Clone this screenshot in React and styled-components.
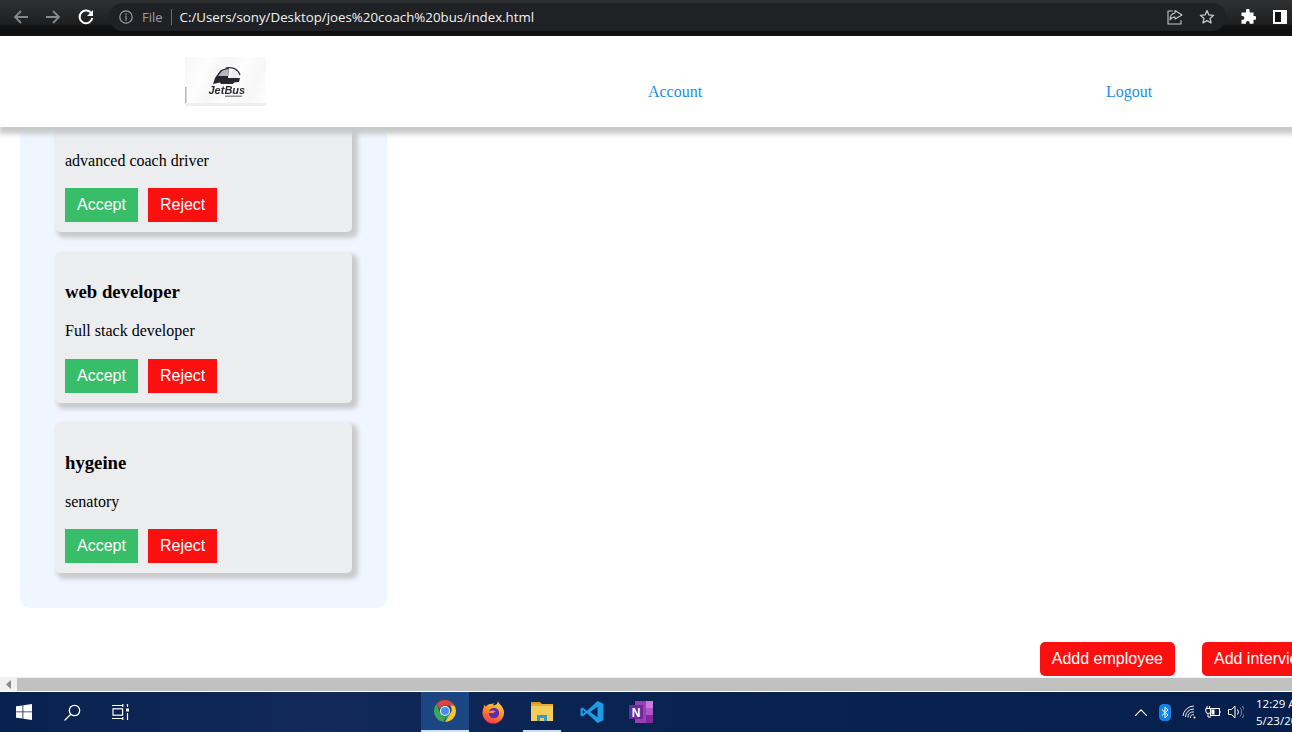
import React from "react";
import styled, { createGlobalStyle } from "styled-components";

const Global = createGlobalStyle`
  html, body { margin: 0; padding: 0; width: 1292px; height: 732px; overflow: hidden; background: #fff; }
  * { box-sizing: border-box; }
`;
const Screen = styled.div`
  width: 1292px; height: 732px; display: flex; flex-direction: column; overflow: hidden;
`;
const BrowserBar = styled.header`
  height: 36px; flex: none; display: flex; align-items: flex-start;
  padding: 3px 0 0 9px;
  background: linear-gradient(#2f3032 0, #1e1f20 24px, #121212 26px, #0c0c0c 100%);
  color: #fff;
  border-bottom: 3px solid #111;
`;
const NavIcon = styled.button`
  width: 24px; height: 28px; padding: 0; border: 0; background: none; flex: none;
  margin-right: ${p => p.$gap}px; display: flex; align-items: center; justify-content: center;
  color: ${p => p.$dim ? "#85888c" : "#fff"};
`;
const Omnibox = styled.div`
  width: 1117px; height: 28px; margin-left: 11px; margin-right: 11px; flex: none; border-radius: 14px; background: #202124;
  display: flex; align-items: center; padding: 0 11px 0 9px;
  font: 13px "Open Sans", sans-serif;
`;
const Scheme = styled.span`
  color: #9aa0a6; margin-left: 8px; padding-right: 8px; border-right: 1px solid #6a6d70; line-height: 16px; font-size: 13px;
`;
const Url = styled.span`
  color: #f1f3f4; margin-left: 8px; flex: 1; font-size: 13.3px; white-space: nowrap;
`;
const BoxIcon = styled.span`
  display: flex; margin-left: ${p => p.$gap || 0}px; color: ${p => p.$c || "#c4c7ca"};
  margin-top: ${p => p.$top || 0}px;
`;
const Viewport = styled.main`
  flex: 1; min-height: 0; overflow: hidden; background: #fff;
`;
const Page = styled.div`
  width: 1358px;
`;
const TopNav = styled.nav`
  position: relative; z-index: 2; height: 91px; background: #fff;
  display: grid; grid-template-columns: 450px 450px 458px; align-items: center; justify-items: center;
  box-shadow: 0 6px 5px 1px #c9c9c9;
`;
const NavLink = styled.a`
  font: 16px "Liberation Serif", serif; color: #1b8fdf; margin-top: 21px;
`;
const Logo = styled.div`
  width: 81px; height: 49px;
  background: linear-gradient(115deg, #f7f7f8 0, #fdfdfd 25%, #f6f6f7 40%, #fdfdfd 60%, #f7f7f8 80%, #fff 100%);
`;
const Content = styled.div`
  margin-top: -80.6px;
`;
const Panel = styled.section`
  width: 367px; margin-left: 20px; padding: 35px; background: #eff6ff; border-radius: 10px;
  display: flex; flex-direction: column; gap: 19.4px;
`;
const Card = styled.article`
  height: 151px; padding: 10px; background: #ecedef; border-radius: 5px;
  width: 297px;
  box-shadow: 4px 4px 4px 2px #cbcbcb;
  font-family: "Liberation Serif", serif; color: #000;
  display: flex; flex-direction: column;
`;
const Title = styled.h3`
  margin: 19.400px 0 0; font-size: 18.72px; line-height: 21px; font-weight: bold;
`;
const Desc = styled.p`
  margin: 20px 0 0; font-size: 16px; line-height: 18px;
`;
const Actions = styled.div`
  display: flex; gap: 10px; margin-top: auto;
`;
const Action = styled.button`
  height: 34px; padding: 0 12px; border: 0; color: #fff; background: ${p => p.$bg};
  font: 16px "Liberation Sans", sans-serif;
`;
const Footer = styled.div`
  display: flex; justify-content: flex-end; gap: 27px; margin-top: 34px; padding-right: 36px;
`;
const AddButton = styled.button`
  height: 34px; padding: 0 12px; border: 0; border-radius: 5px; background: #fb0f0f; color: #fff; white-space: nowrap;
  font: 16px "Liberation Sans", sans-serif;
`;
const HScroll = styled.div`
  height: 15px; flex: none; display: flex; background: #f1f1f1; border-bottom: 1px solid #fff;
`;
const ScrollArrow = styled.div`
  width: 17px; display: flex; align-items: center; justify-content: center;
`;
const ScrollThumb = styled.div`
  flex: 1; height: 13px; margin-top: 1px; background: #c1c1c1;
`;
const Taskbar = styled.footer`
  height: 40px; flex: none; display: flex; align-items: center;
  background: linear-gradient(90deg, #08224f 0, #12295a 25%, #0a2452 45%, #061f4c 100%);
  color: #fff; overflow: hidden;
`;
const TaskSlot = styled.div`
  width: ${p => p.$w}px; height: 40px; flex: none; display: flex; align-items: center; justify-content: center;
  margin-left: ${p => p.$ml || 0}px;
  background: ${p => p.$active ? "#1b4681" : "transparent"};
  border-bottom: ${p => p.$line ? "2px solid #cfe0f3" : "0"};
`;
const Tray = styled.div`
  display: flex; align-items: center; margin-left: 470px;
`;
const Clock = styled.div`
  margin-left: 9px; font: 11.5px/17px "Open Sans", sans-serif; color: #fff; white-space: nowrap; width: 40px; overflow: hidden; text-align: left;
`;

const s = { fill: "none", stroke: "currentColor", strokeLinecap: "round", strokeLinejoin: "round" };
const Back = () => <svg width="18" height="18" viewBox="0 0 18 18" {...s} strokeWidth="1.8" strokeLinecap="butt" strokeLinejoin="miter"><path d="M16 9H3M9 3 3 9l6 6" /></svg>;
const Fwd = () => <svg width="18" height="18" viewBox="0 0 18 18" {...s} strokeWidth="1.8" strokeLinecap="butt" strokeLinejoin="miter"><path d="M2 9h13M9 3l6 6-6 6" /></svg>;
const Reload = () => <svg width="18" height="18" viewBox="0 0 18 18" fill="none"><path d="M14.500 5.600A6.400 6.400 0 1 0 15.300 10" stroke="#fff" strokeWidth="2" /><path d="M16 2v6h-6z" fill="#fff" /></svg>;
const InfoI = () => <svg width="16" height="16" viewBox="0 0 16 16" {...s} stroke="#9aa0a6" strokeWidth="1.200"><circle cx="8" cy="8" r="6.200" /><path d="M8 7.200v4M8 4.600v1" /></svg>;
const Share = () => <svg width="18" height="18" viewBox="0 0 18 18" {...s} strokeWidth="1.100" strokeLinecap="butt"><path d="M7 3H2v13h13v-4" /><path d="M9 2.500 16 7l-7 4V9c-2.500 0-4 1-5 3 0-4 2-6.500 5-7z" /></svg>;
const Star = () => <svg width="16" height="16" viewBox="0 0 16 16" {...s} strokeWidth="1.300"><path d="m8 1.600 1.900 4.300 4.700.4-3.600 3.100 1.100 4.600L8 11.600 3.900 14l1.100-4.600L1.400 6.300l4.700-.4z" /></svg>;
const Puzzle = () => <svg width="16" height="16" viewBox="0 0 16 16" fill="#fff"><path d="M6 1.500a1.800 1.800 0 0 1 3.600 0V3.500H13.500V7h1a1.900 1.900 0 0 1 0 3.800h-1v4H9.600v-1a1.800 1.800 0 0 0-3.600 0v1H1.500V10.800h1a1.900 1.900 0 0 0 0-3.800h-1V3.500H6z" /></svg>;
const SidePanel = () => <svg width="14" height="14" viewBox="0 0 14 14"><rect width="14" height="14" fill="#fff" /><rect x="2" y="2" width="6" height="10" fill="#111" /></svg>;

const LogoArt = () => (
  <svg width="81" height="49" viewBox="0 0 81 49" style={{ display: "block" }}>
    <defs><filter id="b"><feGaussianBlur stdDeviation="0.700" /></filter></defs>
    <rect x="0" y="30" width="1.500" height="18" fill="#b5b5b5" filter="url(#b)" />
    <rect x="0" y="46" width="81" height="3" fill="#eef0f0" />
    <g filter="url(#b)">
      <path d="M28 27l2-6 5-7c1-1 5-3 9-3l-1 10h12l-1 4-5 .5-1 1.500H36l-1-1.500z" fill="#25252e" />
      <path d="M33 19l4-5c2-1 5-2 7-2l-1 7z" fill="#b8b8be" />
      <path d="M41 11c6-1.500 12 1 14 7" stroke="#34343c" strokeWidth="1.300" fill="none" />
      <path d="M47 13l-2 8h8l-1-6z" fill="#ececee" />
      <text x="23.500" y="37" fontFamily="Liberation Sans, sans-serif" fontWeight="bold" fontStyle="italic" fontSize="11" fill="#2a2a32">JetBus</text>
      <rect x="40" y="38.500" width="17" height="1.500" fill="#8d8d92" />
    </g>
  </svg>
);

const Windows = () => <svg width="16" height="16" viewBox="0 0 16 16" fill="#fff"><path d="M0 2.300 6.500 1.400V7.500H0zM7.300 1.300 16 0v7.500H7.300zM0 8.300h6.500v6.200L0 13.700zM7.300 8.300H16V16l-8.700-1.300z" /></svg>;
const Search = () => <svg width="17" height="17" viewBox="0 0 17 17" {...s} strokeWidth="1.300"><circle cx="10.500" cy="6.500" r="5.200" /><path d="M6.800 10.200 1 16" /></svg>;
const TaskView = () => <svg width="17" height="16" viewBox="0 0 17 16" fill="none" stroke="#fff" strokeWidth="1.200"><path d="M0 1.500h11M0 14.500h11M10.800 0v3M10.800 13v3" /><rect x="1" y="4.800" width="9.600" height="6.400" /><rect x="14" y="4.500" width="3" height="3" fill="#fff" stroke="none" /><path d="M15.500 0v3M15.500 9v7" /></svg>;

const ChromeLogo = () => (
  <svg width="22" height="22" viewBox="0 0 22 22">
    <path d="M11 0a11 11 0 0 1 9.500 5.500H11a5.500 5.500 0 0 0-5.200 3.600L2.400 4.100A11 11 0 0 1 11 0z" fill="#dc4539" />
    <path d="M20.500 5.500A11 11 0 0 1 11 22l4.800-8.200a5.500 5.500 0 0 0 0-8.300z" fill="#f7c42b" />
    <path d="M2.400 4.100 6.600 13.500a5.500 5.500 0 0 0 5.900 2.800L9.500 21.900A11 11 0 0 1 2.400 4.100z" fill="#3da556" />
    <path d="M11 22 15.800 13.800 12.500 16.300z" fill="#3da556" />
    <circle cx="11" cy="11" r="5" fill="#fff" /><circle cx="11" cy="11" r="4" fill="#4a8df0" />
  </svg>
);
const Firefox = () => (
  <svg width="24" height="24" viewBox="0 0 24 24">
    <defs><linearGradient id="ff" x1="0.700" y1="0" x2="0.300" y2="1"><stop offset="0" stopColor="#ffd23a" /><stop offset=".5" stopColor="#ff8a2a" /><stop offset="1" stopColor="#f0344e" /></linearGradient></defs>
    <path d="M16 1c.5 3 4 4 5.500 8.500A10.800 10.800 0 1 1 1.500 8c.3-1.500 1-3 1.500-3.500 0 1 .5 1.800 1 2.200C5.200 4.500 7 3.800 9 4c2-.2 3-1 3.200-1 0 1-1.500 2-1.500 2 2 .5 3.500 0 4.500-1.500.5-.8.8-1.600.8-2.500z" fill="url(#ff)" />
    <circle cx="12" cy="13" r="5.200" fill="#5b2bb0" />
    <path d="M7 11.500c2-1.500 5-1.500 7 0-1.500 0-2 .8-2 1.500H7z" fill="#ff8a2a" />
  </svg>
);
const Folder = () => (
  <svg width="22" height="20" viewBox="0 0 22 20">
    <path d="M0 1h9l2 2H0z" fill="#d79a1e" />
    <rect y="3" width="22" height="17" fill="#f6cd5c" />
    <rect y="3" width="22" height="2" fill="#e9ae2f" />
    <path d="M6 14h10v6h-3v-3H9v3H6z" fill="#2d9fd8" />
  </svg>
);
const VSCode = () => (
  <svg width="24" height="24" viewBox="0 0 24 24">
    <path d="M17.500 1 23.500 3.800V20.200L17.500 23 7 13.200 2.600 16.600.5 15.500V8.500L2.600 7.400 7 10.800z" fill="#1f9be6" />
    <path d="M17.500 6.800 10.200 12l7.300 5.200z" fill="#06244f" />
    <path d="M2.700 9.800 5 12l-2.300 2.200z" fill="#06244f" />
  </svg>
);
const OneNote = () => (
  <svg width="24" height="22" viewBox="0 0 24 22">
    <rect x="6" y="0" width="18" height="22" fill="#9c3fb5" />
    <rect x="17" y="0" width="7" height="7" fill="#c77bdc" /><rect x="17" y="7" width="7" height="7" fill="#ae55c8" /><rect x="17" y="14" width="7" height="8" fill="#7f2a9e" />
    <rect x="0" y="4" width="14" height="14" fill="#6a2a9c" />
    <text x="7" y="15.500" textAnchor="middle" fontFamily="Liberation Sans, sans-serif" fontWeight="bold" fontSize="12" fill="#fff">N</text>
  </svg>
);
const Chevron = () => <svg width="12" height="7" viewBox="0 0 12 7" {...s} strokeWidth="1.200"><path d="m.6 6.400 5.400-5.600 5.400 5.600" /></svg>;
const Bluetooth = () => <svg width="12" height="17" viewBox="0 0 12 17"><rect width="12" height="17" rx="4.500" fill="#1283e8" /><path d="m3 5.500 6 5.500-3 3V3l3 3-6 5.500" fill="none" stroke="#fff" strokeWidth="1" /></svg>;
const Wifi = () => <svg width="14" height="14" viewBox="0 0 14 14" fill="none" stroke="#e8edf3" strokeWidth="1"><path d="M1 11A11 11 0 0 1 12 1M3.500 12A8 8 0 0 1 12 4M6 12.500A5 5 0 0 1 12 7M8.500 13A2.500 2.500 0 0 1 12 10" /><circle cx="12.500" cy="12.500" r="1" fill="#fff" stroke="none" /></svg>;
const Battery = () => <svg width="16" height="12" viewBox="0 0 16 12" fill="none" stroke="#fff" strokeWidth="1"><rect x="5.500" y="2.500" width="9" height="7" /><rect x="6.500" y="3.500" width="3" height="5" fill="#fff" stroke="none" /><path d="M15 5v2M2 0v2M4.500 0v2M.8 2.500h5V5a2.500 2.500 0 0 1-5 0zM3 7.500V11h3" /></svg>;
const Speaker = () => <svg width="16" height="14" viewBox="0 0 16 14" fill="none" stroke="#fff" strokeWidth="1"><path d="M.5 4.500h3L7 1v12L3.500 9.500h-3z" /><path d="M9.500 4.500a4 4 0 0 1 0 5" /><path d="M12 2.500a7 7 0 0 1 0 9M14.300 1a10 10 0 0 1 0 12" stroke="#7d8aa3" /></svg>;

const cards = [
  { title: "", desc: "advanced coach driver" },
  { title: "web developer", desc: "Full stack developer" },
  { title: "hygeine", desc: "senatory" },
];

export default function App() {
  return (
    <Screen>
      <Global />
      <BrowserBar>
        <NavIcon $gap={8} $dim><Back /></NavIcon>
        <NavIcon $gap={9} $dim><Fwd /></NavIcon>
        <NavIcon $gap={0}><Reload /></NavIcon>
        <Omnibox>
          <InfoI />
          <Scheme>File</Scheme>
          <Url>C:/Users/sony/Desktop/joes%20coach%20bus/index.html</Url>
          <BoxIcon><Share /></BoxIcon>
          <BoxIcon $gap={15}><Star /></BoxIcon>
        </Omnibox>
        <BoxIcon $gap={3} $top={6}><Puzzle /></BoxIcon>
        <BoxIcon $gap={17} $top={7}><SidePanel /></BoxIcon>
      </BrowserBar>
      <Viewport>
        <Page>
          <TopNav>
            <Logo><LogoArt /></Logo>
            <NavLink>Account</NavLink>
            <NavLink>Logout</NavLink>
          </TopNav>
          <Content>
            <Panel>
              {cards.map((c, i) => (
                <Card key={i}>
                  <Title>{c.title || "\u00a0"}</Title>
                  <Desc>{c.desc}</Desc>
                  <Actions>
                    <Action $bg="#38bd69">Accept</Action>
                    <Action $bg="#fb0f0f">Reject</Action>
                  </Actions>
                </Card>
              ))}
            </Panel>
            <Footer>
              <AddButton>Addd employee</AddButton>
              <AddButton>Add interview</AddButton>
            </Footer>
          </Content>
        </Page>
      </Viewport>
      <HScroll>
        <ScrollArrow><svg width="5" height="9" viewBox="0 0 5 9"><path d="M5 0v9L0 4.500z" fill="#8a8a8a" /></svg></ScrollArrow>
        <ScrollThumb />
      </HScroll>
      <Taskbar>
        <TaskSlot $w={48}><Windows /></TaskSlot>
        <TaskSlot $w={48}><Search /></TaskSlot>
        <TaskSlot $w={48}><TaskView /></TaskSlot>
        <TaskSlot $w={48} $ml={277} $active $line><ChromeLogo /></TaskSlot>
        <TaskSlot $w={50}><Firefox /></TaskSlot>
        <TaskSlot $w={38} $ml={4} $line><Folder /></TaskSlot>
        <TaskSlot $w={62}><VSCode /></TaskSlot>
        <TaskSlot $w={36}><OneNote /></TaskSlot>
        <Tray>
          <TaskSlot $w={24}><Chevron /></TaskSlot>
          <TaskSlot $w={24}><Bluetooth /></TaskSlot>
          <TaskSlot $w={24}><Wifi /></TaskSlot>
          <TaskSlot $w={24}><Battery /></TaskSlot>
          <TaskSlot $w={22}><Speaker /></TaskSlot>
          <Clock>12:29 AM<br />5/23/2021</Clock>
        </Tray>
      </Taskbar>
    </Screen>
  );
}
